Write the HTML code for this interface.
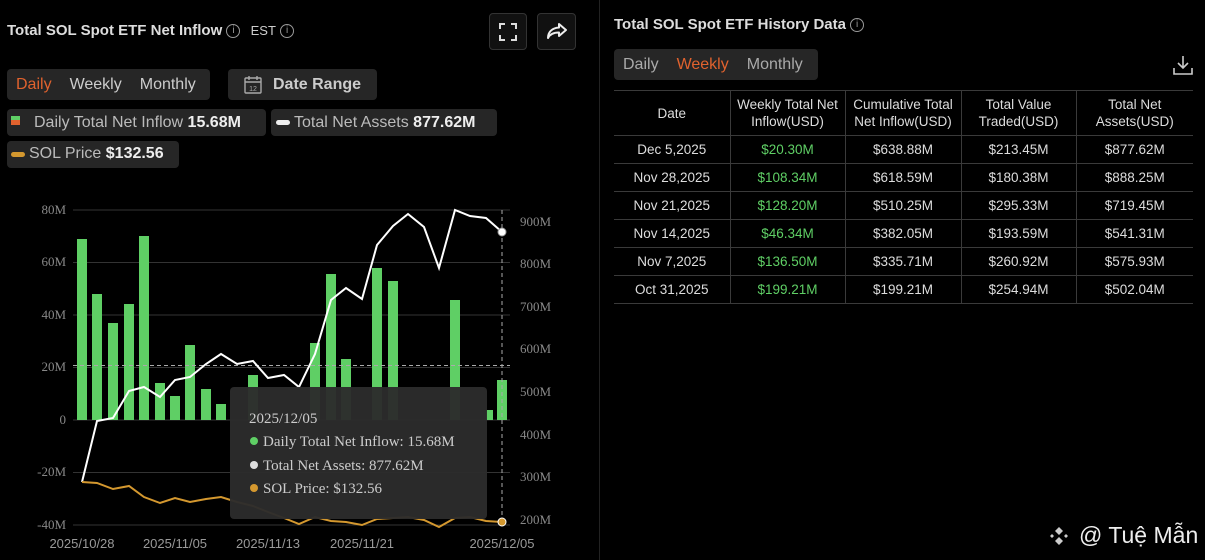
<!DOCTYPE html>
<html><head><meta charset="utf-8"><style>
*{margin:0;padding:0;box-sizing:border-box}
body{width:1205px;height:560px;background:#000;font-family:"Liberation Sans",sans-serif;color:#ccc;position:relative;overflow:hidden}
.a{position:absolute;white-space:nowrap}
.pill{position:absolute;background:#262626;border-radius:4px}
.t{font-size:15px;font-weight:bold;color:#ddd}
table{position:absolute;left:614px;top:90px;border-collapse:collapse;font-size:13.5px;color:#ddd}
td,th{border:1px solid #3a3a3a;text-align:center;font-weight:normal;height:28px;padding:0}
tr td{border-left:none;border-right:none}
th{height:45px;line-height:17px;border-left:none;border-right:none}
td+td,th+th{border-left:1px solid #3a3a3a}
.g{color:#5fcf65}
.ic{display:inline-block;width:14px;height:14px;border:1.3px solid #999;border-radius:50%;font-size:10px;line-height:12px;text-align:center;color:#999;vertical-align:middle;font-weight:normal}
</style></head><body>
<div class="a t" style="left:7px;top:22px">Total SOL Spot ETF Net Inflow <span class="ic">i</span> <span style="font-weight:normal;font-size:13px;color:#ccc;margin-left:6px">EST</span> <span class="ic">i</span></div>
<div class="pill" style="left:489px;top:13px;width:38px;height:37px;border:1px solid #333;background:#111"></div>
<svg class="a" style="left:499px;top:23px" width="18" height="18" viewBox="0 0 18 18" fill="none" stroke="#ddd" stroke-width="2"><path d="M1 6V1h5M12 1h5v5M17 12v5h-5M6 17H1v-5"/></svg>
<div class="pill" style="left:537px;top:13px;width:39px;height:37px;border:1px solid #333;background:#111"></div>
<svg class="a" style="left:546px;top:22px" width="22" height="18" viewBox="0 0 22 18" fill="none" stroke="#eee" stroke-width="2" stroke-linejoin="round"><path d="M13 2l7 6-7 6v-3.5C8 10.5 4 12 2 16 2 10 6 6 13 5.5z"/></svg>

<div class="pill" style="left:7px;top:69px;width:203px;height:31px"></div>
<div class="a" style="left:16px;top:76px;font-size:16px"><span style="color:#e0622e">Daily</span><span style="margin-left:18px">Weekly</span><span style="margin-left:18px">Monthly</span></div>
<div class="pill" style="left:228px;top:69px;width:149px;height:31px"></div>
<svg class="a" style="left:244px;top:75px" width="18" height="19" viewBox="0 0 18 19" fill="none" stroke="#aaa" stroke-width="1.4"><rect x="1" y="3" width="16" height="15" rx="1"/><path d="M5 1v4M13 1v4M1 7h16"/><text x="9" y="16" font-size="7" fill="#aaa" stroke="none" text-anchor="middle" font-family="Liberation Sans">12</text></svg>
<div class="a" style="left:273px;top:76px;font-size:16px;font-weight:bold;color:#ccc">Date Range</div>

<div class="pill" style="left:7px;top:109px;width:259px;height:27px"></div>
<div class="a" style="left:11px;top:116px;width:9px;height:4px;background:#5fcf65"></div><div class="a" style="left:11px;top:120px;width:9px;height:5px;background:#e0622e"></div>
<div class="a" style="left:34px;top:114px;font-size:16px;color:#bbb">Daily Total Net Inflow <b style="color:#eee">15.68M</b></div>
<div class="pill" style="left:271px;top:109px;width:226px;height:27px"></div>
<div class="a" style="left:276px;top:120px;width:14px;height:5px;background:#eee;border-radius:3px"></div>
<div class="a" style="left:294px;top:114px;font-size:16px;color:#bbb">Total Net Assets <b style="color:#eee">877.62M</b></div>
<div class="pill" style="left:7px;top:141px;width:172px;height:27px"></div>
<div class="a" style="left:11px;top:152px;width:14px;height:5px;background:#d4982f;border-radius:3px"></div>
<div class="a" style="left:29px;top:145px;font-size:16px;color:#bbb">SOL Price <b style="color:#eee">$132.56</b></div>

<svg class="a" style="left:0;top:190px" width="600" height="370" viewBox="0 190 600 370" font-family="Liberation Serif" font-size="13">
<g stroke="#333" stroke-width="1">
<path d="M73 210H510M73 262.5H510M73 315H510M73 367.5H510M73 420H510M73 472.5H510M73 525H510"/>
</g>
<g fill="#888" text-anchor="end">
<text x="66" y="214">80M</text><text x="66" y="266">60M</text><text x="66" y="319">40M</text><text x="66" y="371">20M</text><text x="66" y="424">0</text><text x="66" y="476">-20M</text><text x="66" y="529">-40M</text>
</g>
<g fill="#888">
<text x="520" y="226">900M</text><text x="520" y="268">800M</text><text x="520" y="311">700M</text><text x="520" y="353">600M</text><text x="520" y="396">500M</text><text x="520" y="439">400M</text><text x="520" y="481">300M</text><text x="520" y="524">200M</text>
</g>
<g fill="#5fcf65">
<rect x="77" y="239" width="10" height="181"/><rect x="92" y="294" width="10" height="126"/><rect x="108" y="323" width="10" height="97"/><rect x="124" y="304" width="10" height="116"/><rect x="139" y="236" width="10" height="184"/><rect x="155" y="383" width="10" height="37"/><rect x="170" y="396" width="10" height="24"/><rect x="185" y="345" width="10" height="75"/><rect x="201" y="389" width="10" height="31"/><rect x="216" y="404" width="10" height="16"/><rect x="248" y="375" width="10" height="45"/><rect x="310" y="343" width="10" height="77"/><rect x="326" y="274" width="10" height="146"/><rect x="341" y="359" width="10" height="61"/><rect x="372" y="268" width="10" height="152"/><rect x="388" y="281" width="10" height="139"/><rect x="450" y="300" width="10" height="120"/><rect x="486" y="410" width="7" height="10"/><rect x="497" y="380" width="10" height="40"/>
</g>
<path d="M73 365.5H510M502 210V525" stroke="#aaa" stroke-dasharray="4 3" fill="none"/>
<polyline fill="none" stroke="#fff" stroke-width="2" points="82,482 97,421 113,418 129,391 144,387 160,397 175,380 190,377 206,364 221,354 237,364 253,361 268,378 284,375 299,387 315,354 331,300 346,288 362,299 377,245 393,226 408,214 424,227 439,268 455,210 470,216 486,218 502,232"/>
<polyline fill="none" stroke="#d4982f" stroke-width="2" points="82,482 97,483 113,489 129,486 144,497 160,503 175,498 190,502 206,499 221,497 237,502 253,506 268,512 284,518 299,524 315,517 331,521 346,522 362,525 377,519 393,518 408,517 424,520 439,527 455,518 470,517 486,521 502,522"/>
<circle cx="502" cy="232" r="4" fill="#fff" stroke="#999"/><circle cx="502" cy="522" r="4" fill="#d4982f" stroke="#fff"/>
<rect x="230" y="387" width="257" height="132" rx="4" fill="#2c2c2c" fill-opacity="0.96"/>
<g font-size="15" fill="#ccc"><text x="249" y="423">2025/12/05</text>
<circle cx="254" cy="441" r="4" fill="#5fcf65"/><text x="263" y="446">Daily Total Net Inflow: 15.68M</text>
<circle cx="254" cy="465" r="4" fill="#ddd"/><text x="263" y="470">Total Net Assets: 877.62M</text>
<circle cx="254" cy="488" r="4" fill="#d4982f"/><text x="263" y="493">SOL Price: $132.56</text></g>
<g fill="#999" font-family="Liberation Sans" font-size="13" text-anchor="middle">
<text x="82" y="548">2025/10/28</text><text x="175" y="548">2025/11/05</text><text x="268" y="548">2025/11/13</text><text x="362" y="548">2025/11/21</text><text x="502" y="548">2025/12/05</text></g>
</svg>

<div class="a" style="left:599px;top:0;width:1px;height:560px;background:#222"></div>
<div class="a t" style="left:614px;top:16px">Total SOL Spot ETF History Data <span class="ic">i</span></div>
<div class="pill" style="left:614px;top:49px;width:204px;height:31px"></div>
<div class="a" style="left:623px;top:56px;font-size:16px;color:#aaa">Daily<span style="color:#e0622e;margin-left:18px">Weekly</span><span style="margin-left:18px">Monthly</span></div>
<svg class="a" style="left:1172px;top:54px" width="22" height="22" viewBox="0 0 22 22" fill="none" stroke="#ccc" stroke-width="1.6"><path d="M11 2v12M6 9l5 5 5-5M2 14v6h18v-6"/></svg>
<table>
<tr><th style="width:116px">Date</th><th style="width:115px">Weekly Total Net<br>Inflow(USD)</th><th style="width:116px">Cumulative Total<br>Net Inflow(USD)</th><th style="width:115px">Total Value<br>Traded(USD)</th><th style="width:117px">Total Net<br>Assets(USD)</th></tr>
<tr><td>Dec 5,2025</td><td class="g">$20.30M</td><td>$638.88M</td><td>$213.45M</td><td>$877.62M</td></tr>
<tr><td>Nov 28,2025</td><td class="g">$108.34M</td><td>$618.59M</td><td>$180.38M</td><td>$888.25M</td></tr>
<tr><td>Nov 21,2025</td><td class="g">$128.20M</td><td>$510.25M</td><td>$295.33M</td><td>$719.45M</td></tr>
<tr><td>Nov 14,2025</td><td class="g">$46.34M</td><td>$382.05M</td><td>$193.59M</td><td>$541.31M</td></tr>
<tr><td>Nov 7,2025</td><td class="g">$136.50M</td><td>$335.71M</td><td>$260.92M</td><td>$575.93M</td></tr>
<tr><td>Oct 31,2025</td><td class="g">$199.21M</td><td>$199.21M</td><td>$254.94M</td><td>$502.04M</td></tr>
</table>
<svg class="a" style="left:1046px;top:525px" width="26" height="22" viewBox="0 0 26 22" fill="#ccc"><path d="M13 2l4 4-4 4-4-4zM6 9l2 2-2 2-2-2zM20 9l2 2-2 2-2-2zM13 12l4 4-4 4-4-4z"/></svg>
<div class="a" style="left:1079px;top:522px;font-size:23px;color:#eee">@ Tuệ Mẫn</div>
</body></html>
